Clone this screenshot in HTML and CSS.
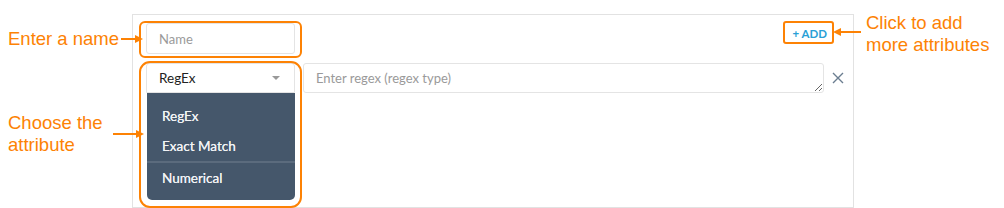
FILE: index.html
```html
<!DOCTYPE html>
<html lang="en">
<head>
    <meta charset="UTF-8">
    <meta name="viewport" content="width=device-width, initial-scale=1.0">
    <title>Attributes</title>
    <link rel="stylesheet" href="styles.css">
</head>
<body>
    <div class="panel">
        <div class="row top-row">
            <input class="field name-field" type="text" placeholder="Name">
            <button class="add-btn">+ ADD</button>
        </div>
        <div class="row attr-row">
            <div class="select-wrap">
                <div class="select">
                    <span>RegEx</span>
                    <span class="caret"></span>
                </div>
                <ul class="menu">
                    <li>RegEx</li>
                    <li>Exact Match</li>
                    <li class="divided">Numerical</li>
                </ul>
            </div>
            <textarea class="field regex-field" placeholder="Enter regex (regex type)"></textarea>
            <svg class="remove" width="12" height="12" viewBox="0 0 12 12">
                <path d="M1 1 L11 11 M11 1 L1 11" stroke="#6b7d90" stroke-width="1.4" fill="none"/>
            </svg>
        </div>
    </div>

    <!-- callouts drawn over the form -->
    <div class="note note-name">Enter a name</div>
    <div class="note note-attr">Choose the<br>attribute</div>
    <div class="note note-add">Click to add<br>more attributes</div>

    <div class="hl hl-name"></div>
    <div class="hl hl-attr"></div>
    <div class="hl hl-add"></div>

    <svg class="arrows" width="1004" height="208">
        <g stroke="#fd8204" stroke-width="2" fill="#fd8204">
            <line x1="121" y1="39" x2="136" y2="39"/>
            <polygon points="143,39 135,35 135,43" stroke="none"/>
            <line x1="113" y1="134" x2="136" y2="134"/>
            <polygon points="144,134 136,130 136,138" stroke="none"/>
            <line x1="840" y1="32" x2="861" y2="32"/>
            <polygon points="833,32 841,28 841,36" stroke="none"/>
        </g>
    </svg>
</body>
</html>
```

FILE: styles.css
```css
body {
    margin: 0;
    font-family: Lato, "Open Sans", sans-serif;
    background-color: #fff;
    overflow: hidden;
}
.panel {
    box-sizing: border-box;
    margin: 14px 0 0 132px;
    width: 722px;
    height: 194px;
    border: 1px solid #e2e2e2;
    padding: 8px 0 0 13px;
}
.row {
    display: flex;
}
.top-row {
    justify-content: space-between;
    align-items: flex-start;
    padding-right: 26px;
}
.attr-row {
    margin-top: 9px;
    align-items: flex-start;
    gap: 8px;
}
.field {
    box-sizing: border-box;
    border: 1px solid #e4e4e4;
    border-radius: 3px;
    font-family: Lato, sans-serif;
    font-size: 13px;
    color: #333;
    background: #fff;
    outline: none;
}
.field::placeholder {
    color: #9a9a9a;
}
.name-field {
    width: 149px;
    height: 31px;
    padding: 0 12px;
}
.add-btn {
    margin-top: 4px;
    padding: 0;
    border: none;
    background: none;
    font-family: Lato, sans-serif;
    font-weight: bold;
    font-size: 11.5px;
    color: #2a9fd6;
}
.select-wrap {
    width: 149px;
}
.select {
    box-sizing: border-box;
    height: 30px;
    padding: 0 12px;
    border: 1px solid #e4e4e4;
    border-radius: 3px 3px 0 0;
    display: flex;
    align-items: center;
    justify-content: space-between;
    font-size: 13.5px;
    color: #222;
}
.caret {
    width: 0;
    height: 0;
    border-left: 4px solid transparent;
    border-right: 4px solid transparent;
    border-top: 4px solid #999;
    margin-right: 2px;
}
.menu {
    list-style: none;
    margin: 0 0 0 1px;
    padding: 8px 0 7px;
    background-color: #45576b;
    border-radius: 0 0 5px 5px;
}
.menu li {
    height: 30px;
    line-height: 30px;
    padding-left: 15px;
    font-size: 13.5px;
    color: #f1f3f5;
    text-shadow: 0 0 0.4px #f1f3f5;
}
.menu li.divided {
    border-top: 2px solid #5b6b7d;
}
.regex-field {
    width: 521px;
    height: 30px;
    padding: 6px 12px;
    resize: vertical;
    display: block;
}
.remove {
    margin: 9px 0 0 0;
}
.note {
    position: absolute;
    font-family: "Liberation Sans", Arial, sans-serif;
    font-size: 18.5px;
    line-height: 22px;
    color: #fd8204;
}
.note-name {
    left: 8px;
    top: 28px;
}
.note-attr {
    left: 8px;
    top: 112px;
}
.note-add {
    left: 866px;
    top: 12px;
}
.hl {
    position: absolute;
    box-sizing: border-box;
    border: 2px solid #fd8204;
}
.hl-name {
    left: 139px;
    top: 21px;
    width: 163px;
    height: 37px;
    border-radius: 6px;
}
.hl-attr {
    left: 139px;
    top: 61px;
    width: 163px;
    height: 147px;
    border-radius: 11px;
}
.hl-add {
    left: 783px;
    top: 21px;
    width: 51px;
    height: 23px;
    border-radius: 3px;
}
.arrows {
    position: absolute;
    left: 0;
    top: 0;
}
```
